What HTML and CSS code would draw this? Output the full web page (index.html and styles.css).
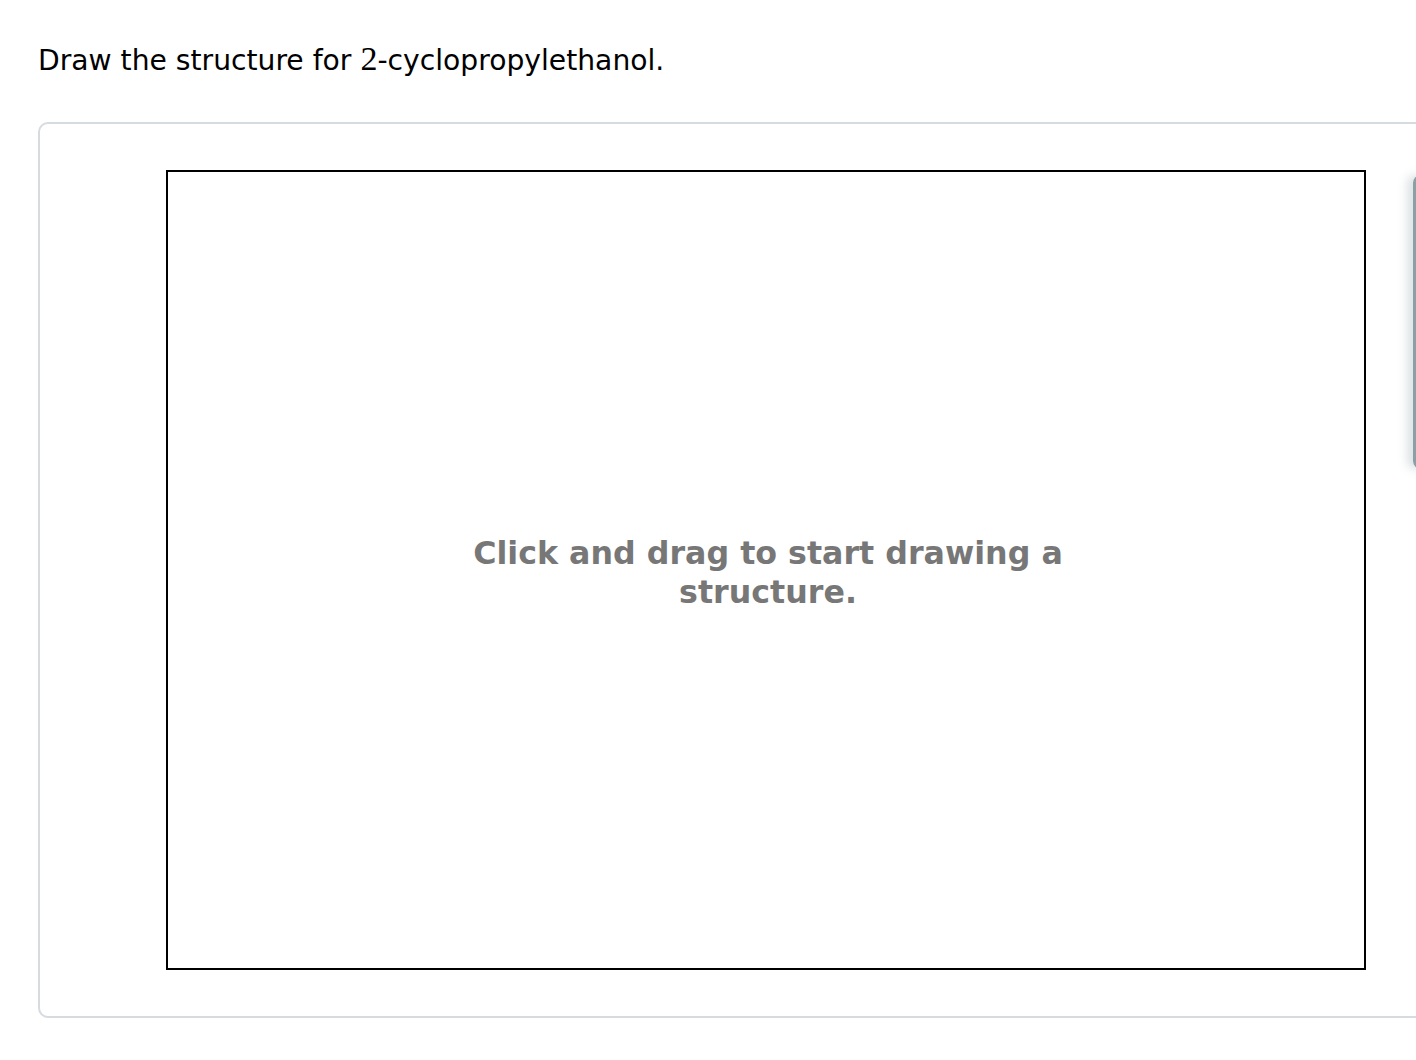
FILE: index.html
```html
<!DOCTYPE html>
<html lang="en">

<head>
    <meta charset="utf-8">
    <meta name="viewport" content="width=device-width, initial-scale=1.0">
    <title>Draw the structure</title>
    <link rel="stylesheet" href="styles.css">
</head>

<body>
    <p class="spoergsmaal">Draw the structure for <span class="tal">2</span>-cyclopropylethanol.</p>
    <section class="panel">
        <div class="tegneflade">
            <p class="hjaelp">Click and drag to start drawing a structure.</p>
        </div>
        <div class="vaerktoej"></div>
    </section>
</body>

</html>
```
FILE: styles.css
```css
* {
    box-sizing: border-box;
    margin: 0px;
    padding: 0px;
}

html,
body {
    overflow: hidden;
}

body {
    background: #ffffff;
    font-family: "DejaVu Sans", Verdana, sans-serif;
    color: #000000;
}

.spoergsmaal {
    height: 77px;
    padding: 43px 0px 0px 38px;
    font-size: 28.2px;
    line-height: 36px;
}

.tal {
    font-family: "Liberation Serif", "Times New Roman", serif;
    font-size: 34px;
    line-height: 20px;
}

.panel {
    display: flex;
    align-items: flex-start;
    gap: 47px;
    width: 1480px;
    margin: 45px 0px 0px 38px;
    padding: 46px 0px 46px 126px;
    border: 2px solid #d6dbdf;
    border-radius: 10px;
}

.tegneflade {
    display: flex;
    align-items: center;
    justify-content: center;
    flex-shrink: 0;
    width: 1200px;
    height: 800px;
    border: 2px solid #000000;
}

.hjaelp {
    width: 640px;
    margin: 6px 0px 0px 4px;
    text-align: center;
    font-size: 31.7px;
    font-weight: bold;
    line-height: 39px;
    color: #777777;
}

.vaerktoej {
    flex-shrink: 0;
    width: 60px;
    height: 294px;
    margin-top: 5px;
    border-left: 3px solid #8c9ea6;
    border-radius: 8px;
    box-shadow: -6px 0px 10px rgba(120, 140, 150, 0.25);
}
```
